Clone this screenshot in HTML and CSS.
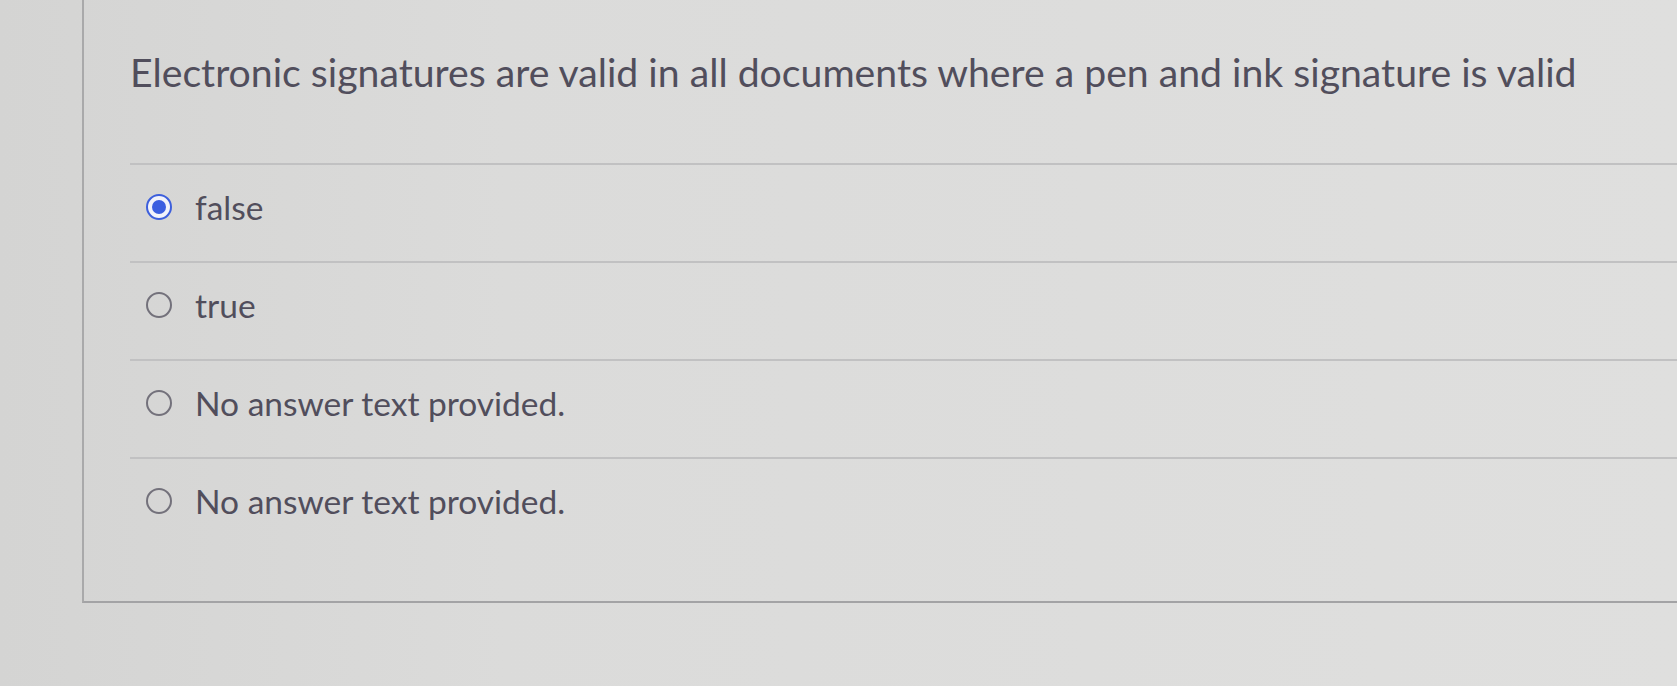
FILE: index.html
```html
<!DOCTYPE html>
<html lang="en">
<head>
<meta charset="utf-8">
<title>Quiz question</title>
<link rel="stylesheet" href="styles.css">
</head>
<body>
<div class="page">
  <div class="gutter"></div>
  <div class="panel">
    <div class="question">Electronic signatures are valid in all documents where a pen and ink signature is valid</div>
    <div class="answers">
      <div class="answer">
        <span class="radio checked"><span class="dot"></span></span>
        <span class="label">false</span>
      </div>
      <div class="answer">
        <span class="radio"></span>
        <span class="label">true</span>
      </div>
      <div class="answer">
        <span class="radio"></span>
        <span class="label">No answer text provided.</span>
      </div>
      <div class="answer">
        <span class="radio"></span>
        <span class="label">No answer text provided.</span>
      </div>
    </div>
  </div>
</div>
</body>
</html>
```

FILE: styles.css
```css
html, body {
  margin: 0;
  padding: 0;
}
body {
  width: 1677px;
  height: 686px;
  overflow: hidden;
  background: linear-gradient(90deg, #d4d4d3 0%, #dbdbda 30%, #dfdfde 100%);
  font-family: Lato, "Open Sans", sans-serif;
  color: #514e5c;
}
.page {
  display: flex;
  height: 686px;
}
.gutter {
  width: 82px;
  flex: none;
}
.panel {
  flex: 1;
  height: 603px;
  box-sizing: border-box;
  border-left: 2px solid #a9a9aa;
  border-bottom: 2px solid #a3a3a5;
  padding-left: 46px;
  display: flex;
  flex-direction: column;
}
.question {
  margin-top: 48px;
  font-size: 39.2px;
  line-height: 48px;
  white-space: nowrap;
}
.answers {
  margin-top: 67px;
}
.answer {
  display: flex;
  align-items: flex-start;
  height: 98px;
  box-sizing: border-box;
  border-top: 2px solid #c1c1c2;
  padding-top: 18px;
}
.radio {
  margin-left: 16px;
  margin-top: 11px;
  width: 26px;
  height: 26px;
  box-sizing: border-box;
  border: 2px solid #73717b;
  border-radius: 50%;
  flex: none;
  display: flex;
  align-items: center;
  justify-content: center;
}
.radio.checked {
  border: 2.5px solid #3d5fdc;
  background: #f2f3fb;
}
.dot {
  width: 14px;
  height: 14px;
  border-radius: 50%;
  background: #3b5ee0;
}
.label {
  margin-left: 23px;
  font-size: 33.5px;
  line-height: 48px;
  white-space: nowrap;
}
```
